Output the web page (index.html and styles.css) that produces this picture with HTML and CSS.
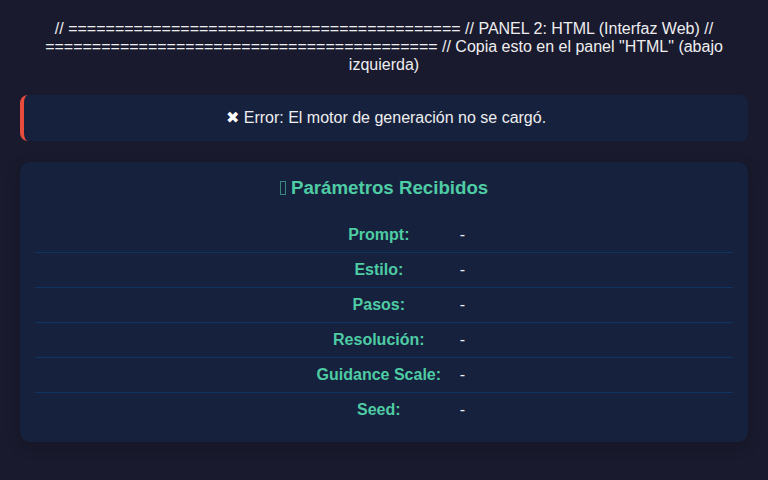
FILE: index.html
```html
<!DOCTYPE html>
<html lang="es">

<head>
    <meta charset="UTF-8">
    <meta name="viewport" content="width=device-width, initial-scale=1.0">
    <title>Parámetros Recibidos</title>
    <link rel="stylesheet" href="styles.css">
</head>

<body>
    <p class="intro">// ========================================== // PANEL 2: HTML (Interfaz Web) // ========================================== // Copia esto en el panel "HTML" (abajo izquierda)</p>

    <div class="error-box">
        <span class="error-icon">✖</span> Error: El motor de generación no se cargó.
    </div>

    <div class="params-card">
        <h3 class="params-title"><span class="missing-glyph"></span> Parámetros Recibidos</h3>

        <div class="param-row">
            <div class="param-label">Prompt:</div>
            <div class="param-value">-</div>
        </div>
        <div class="param-row">
            <div class="param-label">Estilo:</div>
            <div class="param-value">-</div>
        </div>
        <div class="param-row">
            <div class="param-label">Pasos:</div>
            <div class="param-value">-</div>
        </div>
        <div class="param-row">
            <div class="param-label">Resolución:</div>
            <div class="param-value">-</div>
        </div>
        <div class="param-row">
            <div class="param-label">Guidance Scale:</div>
            <div class="param-value">-</div>
        </div>
        <div class="param-row">
            <div class="param-label">Seed:</div>
            <div class="param-value">-</div>
        </div>
    </div>
</body>

</html>
```

FILE: styles.css
```css
* {
    margin: 0;
    padding: 0;
    box-sizing: border-box;
}

body {
    background: #1a1a2e;
    color: #eeeeee;
    font-family: "Liberation Sans", Arial, sans-serif;
    font-size: 16px;
    text-align: center;
    padding: 20px;
}

.intro {
    line-height: 18px;
    margin-bottom: 21px;
}

.error-box {
    background: #16213e;
    border-left: 4px solid #e74c3c;
    border-radius: 8px;
    padding: 14px;
    line-height: 18px;
    margin-bottom: 21px;
}

.error-icon {
    font-family: "DejaVu Sans", sans-serif;
    font-size: 16px;
    font-weight: bold;
    color: #ffffff;
}

.params-card {
    background: #16213e;
    border-radius: 10px;
    padding: 15px;
    box-shadow: 0 4px 15px rgba(0, 0, 0, 0.2);
}

.params-title {
    color: #4ecca3;
    font-size: 18.7px;
    line-height: 22px;
    margin-bottom: 19px;
}

/* emoji que no se pudo mostrar */
.missing-glyph {
    display: inline-block;
    width: 6px;
    height: 14px;
    border: 1px solid #4ecca3;
    opacity: 0.6;
    vertical-align: -1px;
}

.param-row {
    display: flex;
    justify-content: center;
    padding: 8px 0;
    line-height: 18px;
    border-bottom: 1px solid #0f3460;
}

.param-row:last-child {
    border-bottom: none;
}

.param-label {
    width: 152px;
    font-weight: bold;
    color: #4ecca3;
}

.param-value {
    margin-left: 5px;
    text-align: left;
    color: #eeeeee;
}
```
